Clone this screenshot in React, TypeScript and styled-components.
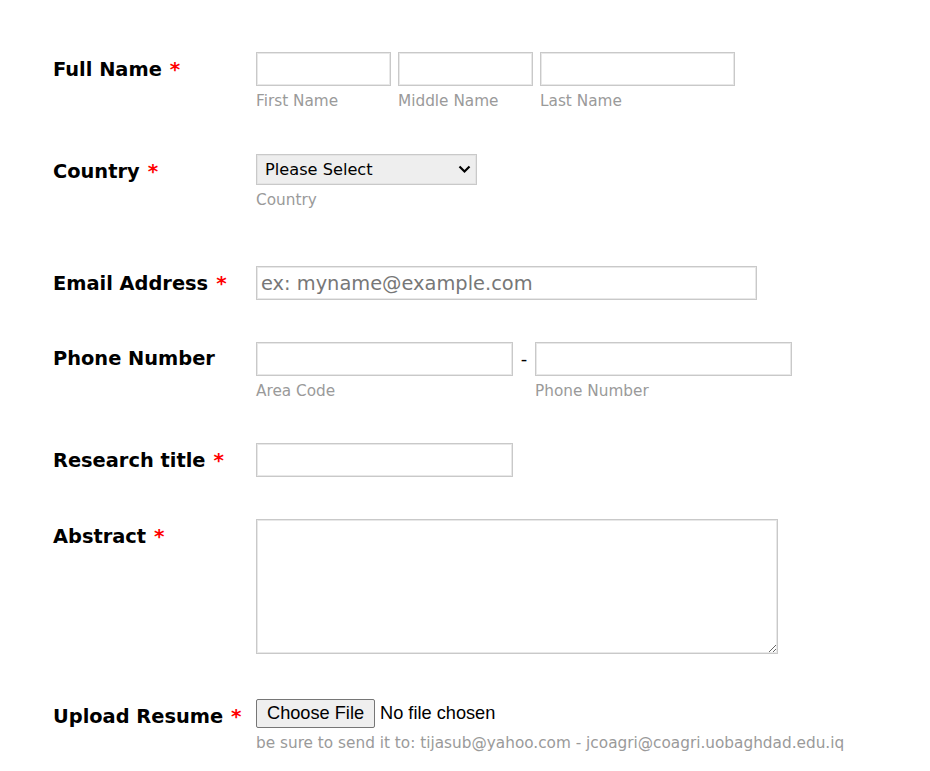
import React from 'react'
import styled, { createGlobalStyle } from 'styled-components'

const GlobalStyle = createGlobalStyle`
    html, body {
        margin: 0;
        padding: 0;
        background: #fff;
    }
    body {
        font-family: "DejaVu Sans", Verdana, sans-serif;
        color: #000;
    }
`

const Form = styled.form`
    padding: 52px 0 0 53px;
    width: 930px;
    box-sizing: border-box;
`

const Row = styled.div<{ spacing?: number }>`
    display: grid;
    grid-template-columns: 203px auto;
    align-items: start;
    margin-bottom: ${p => p.spacing ?? 44}px;
`

const Label = styled.label`
    font-size: 19.4px;
    font-weight: bold;
    line-height: 34px;
    white-space: nowrap;
`

const Required = styled.span`
    color: #f00;
    margin-left: 8px;
    font-size: 20px;
`

const Fields = styled.div`
    display: flex;
    align-items: flex-start;
    gap: 7px;
`

const Field = styled.div`
    display: flex;
    flex-direction: column;
`

const Input = styled.input<{ w: number }>`
    box-sizing: border-box;
    width: ${p => p.w}px;
    height: 34px;
    margin: 0;
    padding: 2px 4px;
    border: 1px solid #c9c9c9;
    box-shadow: inset 0 0 0 1px #e8e8e8;
    background: #fff;
    font-family: "DejaVu Sans", Verdana, sans-serif;
    font-size: 19.4px;
    outline: none;

    &::placeholder {
        color: #777;
    }
`

const Sub = styled.span`
    margin-top: 6px;
    font-size: 15.3px;
    line-height: 18px;
    color: #9a9a9a;
    white-space: nowrap;
`

const SelectWrap = styled.div`
    position: relative;
    width: 221px;
    height: 31px;
`

const Select = styled.select`
    appearance: none;
    box-sizing: border-box;
    width: 100%;
    height: 100%;
    margin: 0;
    padding: 0 30px 0 8px;
    border: 1px solid #c9c9c9;
    box-shadow: inset 0 0 0 1px #e4e4e4;
    background: #eee;
    font-family: "DejaVu Sans", Verdana, sans-serif;
    font-size: 16.2px;
    color: #000;
    outline: none;
`

const Chevron = styled.svg`
    position: absolute;
    right: 6px;
    top: 11px;
    pointer-events: none;
`

const Dash = styled.span`
    width: 8px;
    text-align: center;
    font-size: 18px;
    line-height: 34px;
`

const TextArea = styled.textarea`
    box-sizing: border-box;
    width: 522px;
    height: 135px;
    margin: 0;
    padding: 4px;
    border: 1px solid #c9c9c9;
    box-shadow: inset 0 0 0 1px #e8e8e8;
    font-family: "DejaVu Sans", Verdana, sans-serif;
    font-size: 16px;
    outline: none;
`

const FileInput = styled.input`
    margin: 0;
    height: 29px;
    font-family: "Liberation Sans", Arial, sans-serif;
    font-size: 18.2px;
    color: #000;

    &::file-selector-button {
        font-family: "Liberation Sans", Arial, sans-serif;
        font-size: 18.2px;
        height: 29px;
        padding: 0 10px;
        margin-right: 5px;
        border: 1px solid #767676;
        border-radius: 2px;
        background: #efefef;
        color: #000;
    }
`

export default function App() {
    return (
        <>
            <GlobalStyle />
            <Form>
                <Row spacing={44}>
                    <Label>Full Name<Required>*</Required></Label>
                    <Fields>
                        <Field>
                            <Input w={135} />
                            <Sub>First Name</Sub>
                        </Field>
                        <Field>
                            <Input w={135} />
                            <Sub>Middle Name</Sub>
                        </Field>
                        <Field>
                            <Input w={195} />
                            <Sub>Last Name</Sub>
                        </Field>
                    </Fields>
                </Row>

                <Row spacing={57}>
                    <Label>Country<Required>*</Required></Label>
                    <Field>
                        <SelectWrap>
                            <Select defaultValue="">
                                <option value="">Please Select</option>
                                <option>Iraq</option>
                            </Select>
                            <Chevron width="13" height="9" viewBox="0 0 13 9">
                                <path d="M1.5 1.5 L6.5 6.5 L11.5 1.5" fill="none" stroke="#000" strokeWidth="2.2" />
                            </Chevron>
                        </SelectWrap>
                        <Sub>Country</Sub>
                    </Field>
                </Row>

                <Row spacing={41}>
                    <Label>Email Address<Required>*</Required></Label>
                    <Input w={501} placeholder="ex: myname@example.com" />
                </Row>

                <Row spacing={43}>
                    <Label>Phone Number</Label>
                    <Fields>
                        <Field>
                            <Input w={257} />
                            <Sub>Area Code</Sub>
                        </Field>
                        <Dash>-</Dash>
                        <Field>
                            <Input w={257} />
                            <Sub>Phone Number</Sub>
                        </Field>
                    </Fields>
                </Row>

                <Row spacing={41}>
                    <Label>Research title<Required>*</Required></Label>
                    <Input w={257} />
                </Row>

                <Row spacing={45}>
                    <Label>Abstract<Required>*</Required></Label>
                    <TextArea />
                </Row>

                <Row spacing={20}>
                    <Label>Upload Resume<Required>*</Required></Label>
                    <Field>
                        <FileInput type="file" />
                        <Sub>be sure to send it to: tijasub@yahoo.com - jcoagri@coagri.uobaghdad.edu.iq</Sub>
                    </Field>
                </Row>
            </Form>
        </>
    )
}
